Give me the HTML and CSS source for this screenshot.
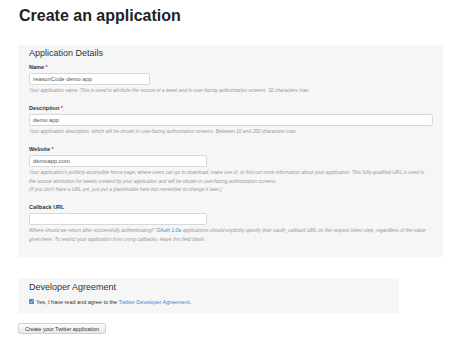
FILE: index.html
```html
<!DOCTYPE html>
<html lang="en">

<head>
    <meta charset="UTF-8">
    <meta name="viewport" content="width=device-width, initial-scale=1.0">
    <title>Create an application</title>
    <link rel="stylesheet" href="styles.css">
</head>

<body>
    <h1>Create an application</h1>

    <form class="app-form">
        <div class="panel details">
            <h2>Application Details</h2>

            <div class="field">
                <label>Name <span class="req">*</span></label>
                <div class="input input-name">reasonCode demo app</div>
                <p class="help">Your application name. This is used to attribute the source of a tweet and in user-facing authorization screens. 32 characters max.</p>
            </div>

            <div class="field">
                <label>Description <span class="req">*</span></label>
                <div class="input input-wide">demo app</div>
                <p class="help">Your application description, which will be shown in user-facing authorization screens. Between 10 and 200 characters max.</p>
            </div>

            <div class="field">
                <label>Website <span class="req">*</span></label>
                <div class="input input-mid">demoapp.com</div>
                <p class="help">Your application's publicly accessible home page, where users can go to download, make use of, or find out more information about your application. This fully-qualified URL is used in the source attribution for tweets created by your application and will be shown in user-facing authorization screens.<br>(If you don't have a URL yet, just put a placeholder here but remember to change it later.)</p>
            </div>

            <div class="field">
                <label>Callback URL</label>
                <div class="input input-mid"></div>
                <p class="help">Where should we return after successfully authenticating? <a href="#">OAuth 1.0a</a> applications should explicitly specify their oauth_callback URL on the request token step, regardless of the value given here. To restrict your application from using callbacks, leave this field blank.</p>
            </div>
        </div>

        <div class="panel agreement">
            <h2>Developer Agreement</h2>
            <div class="check-row">
                <svg class="check" width="5" height="5" viewBox="0 0 10 10">
                    <rect x="0" y="0" width="10" height="10" rx="2" fill="#3b88d8" />
                    <path d="M2.2 5.2 L4.2 7.2 L7.8 2.8" stroke="#fff" stroke-width="1.6" fill="none" />
                </svg>
                <span>Yes, I have read and agree to the <a href="#">Twitter Developer Agreement</a>.</span>
            </div>
        </div>

        <button type="button" class="submit">Create your Twitter application</button>
    </form>
</body>

</html>
```

FILE: styles.css
```css
body {
    margin: 0;
    padding: 0 18px;
    background-color: #fff;
    font-family: "Liberation Sans", Arial, sans-serif;
    color: #333;
}

h1 {
    font-size: 16px;
    line-height: 20px;
    font-weight: bold;
    color: #222;
    margin: 6px 0 19px 1px;
}

.panel {
    background-color: #f6f6f6;
    padding: 3px 11px 13px;
}

.details {
    width: 425px;
    box-sizing: border-box;
}

.panel h2 {
    font-size: 9px;
    line-height: 11px;
    font-weight: normal;
    color: #333;
    margin: 0 0 4.5px;
}

.field {
    margin-bottom: 9px;
}

.field:last-child {
    margin-bottom: 0;
}

label {
    display: block;
    font-size: 5.5px;
    line-height: 7px;
    font-weight: bold;
    color: #333;
    margin-bottom: 2.5px;
}

.req {
    color: #d0353a;
}

.input {
    height: 12px;
    box-sizing: border-box;
    background-color: #fff;
    border: 1px solid #d8d8d8;
    border-radius: 2px;
    font-size: 5.8px;
    line-height: 10px;
    padding: 0 3px;
    color: #555;
}

.input-name {
    width: 121px;
}

.input-wide {
    width: 404px;
}

.input-mid {
    width: 178px;
}

.help {
    font-size: 4.9px;
    line-height: 8.5px;
    font-style: italic;
    color: #999;
    margin: 2px 0 0;
}

a {
    color: #3b88d8;
    text-decoration: none;
}

.help a {
    font-style: normal;
    margin: 0 0.5px;
}

.agreement {
    width: 381px;
    box-sizing: border-box;
    margin-top: 21px;
    padding: 3.5px 11px 7.5px;
}

.agreement h2 {
    margin-bottom: 5px;
}

.check-row {
    display: flex;
    align-items: center;
    gap: 2px;
    font-size: 5.5px;
    line-height: 8px;
    color: #333;
}

.check {
    display: block;
}

.submit {
    display: block;
    margin-top: 10px;
    height: 11px;
    width: 88px;
    padding: 0;
    font-family: "Liberation Sans", Arial, sans-serif;
    font-size: 5.5px;
    color: #333;
    background: linear-gradient(#fdfdfd, #e8e8e8);
    border: 1px solid #d0d0d0;
    border-radius: 2px;
}
```
